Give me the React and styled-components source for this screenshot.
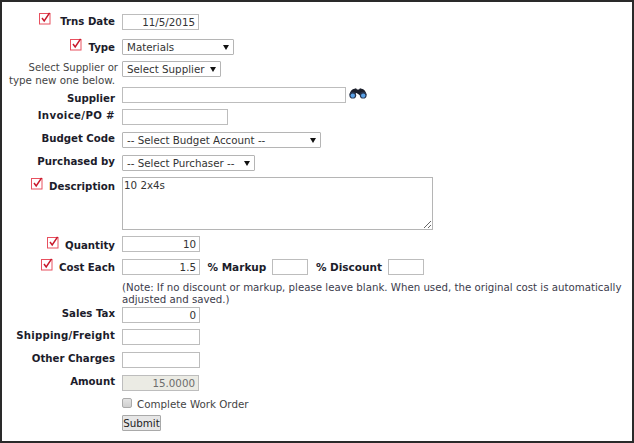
import React from 'react';
import styled, { createGlobalStyle } from 'styled-components';

const GlobalStyle = createGlobalStyle`
    html, body {
        margin: 0;
        background: #fff;
    }
`;

const Frame = styled.div`
    box-sizing: border-box;
    width: 634px;
    height: 443px;
    border: 2px solid #2a2a2a;
    padding-top: 12px;
    font-family: "DejaVu Sans", Verdana, sans-serif;
    font-size: 10.3px;
    color: #333;
    background: #fff;
    overflow: hidden;
`;

const Row = styled.div`
    display: grid;
    grid-template-columns: 113px 1fr;
    column-gap: 7px;
    align-items: ${(p) => (p.$top ? 'start' : 'center')};
    margin-top: ${(p) => p.$gap ?? 7}px;
    min-height: ${(p) => p.$min ?? 16}px;
`;

const Label = styled.label`
    display: flex;
    justify-content: flex-end;
    align-items: flex-start;
    gap: ${(p) => p.$space ?? 5}px;
    font-size: 10.2px;
    font-weight: bold;
    letter-spacing: ${(p) => p.$track ?? 0}px;
    color: #1c1c2b;
    line-height: 13px;
    transform: translateY(${(p) => p.$shift ?? -2}px);
`;

const Mark = styled.svg`
    flex: none;
    margin-top: -3px;
`;

const Hint = styled.div`
    text-align: right;
    line-height: 13px;
    color: #444;
`;

const HintFirst = styled.span`
    display: inline-block;
    margin-right: -3px;
    font-size: 10.1px;
`;

const Field = styled.div`
    display: flex;
    align-items: center;
`;

const TextInput = styled.input`
    box-sizing: border-box;
    width: ${(p) => p.$w}px;
    height: 16px;
    padding: 0 3px;
    border: 1px solid #bdbdbd;
    border-radius: 0;
    outline: none;
    font: inherit;
    color: #333;
    text-align: ${(p) => (p.$right ? 'right' : 'left')};
    background: ${(p) => (p.disabled ? '#ebebe4' : '#fff')};
    &:disabled {
        color: #6d6d6d;
    }
`;

const SelectBox = styled.div`
    box-sizing: border-box;
    width: ${(p) => p.$w}px;
    height: 16px;
    display: flex;
    align-items: center;
    justify-content: space-between;
    padding: 0 4px 0 4px;
    border: 1px solid #b5b5b5;
    border-radius: 1px;
    color: #333;
    background: #fff;
    white-space: nowrap;
`;

const Arrow = styled.span`
    width: 0;
    height: 0;
    border-left: 3px solid transparent;
    border-right: 3px solid transparent;
    border-top: 5px solid #111;
`;

const TextArea = styled.textarea`
    display: block;
    box-sizing: border-box;
    width: 311px;
    height: 53px;
    padding: 1px;
    border: 1px solid #b5b5b5;
    border-radius: 0;
    outline: none;
    font: inherit;
    color: #333;
`;

const InlineLabel = styled.span`
    font-size: 10.5px;
    font-weight: bold;
    color: #1c1c2b;
    margin: 0 6px 0 7.5px;
    white-space: nowrap;
`;

const Note = styled.div`
    padding-top: 1px;
    font-size: 10.22px;
    line-height: 12px;
    color: #3c3c4c;
    width: 505px;
`;

const CheckRow = styled.label`
    display: flex;
    align-items: center;
    gap: 5px;
    height: 11px;
    color: #444;
`;

const Box = styled.span`
    box-sizing: border-box;
    width: 10px;
    height: 10px;
    margin-top: -1px;
    border: 1px solid #aaa;
    border-radius: 2px;
    background: linear-gradient(#e4e4e4, #cfcfcf);
`;

const SubmitButton = styled.button`
    box-sizing: border-box;
    width: 39px;
    height: 16px;
    padding: 0;
    border: 1px solid #a9a9a9;
    border-radius: 1px;
    font: inherit;
    color: #222;
    background: #e6e6e6;
`;

const FindIcon = styled.svg`
    margin: 0 0 3px 3px;
`;

const RequiredMark = () => (
    <Mark width="13" height="13" viewBox="0 0 13 13" fill="none">
        <rect x="0.5" y="1.5" width="10.5" height="10.5" fill="#fff" stroke="#e8505f" strokeWidth="1" />
        <path d="M3 6 L5.2 9 L10.6 0.8" stroke="#c8192c" strokeWidth="1.5" />
    </Mark>
);

const Binoculars = () => (
    <FindIcon width="18" height="11" viewBox="0 0 18 11">
        <path d="M0.5 7 C1 3.5 3 1 5.5 0.8 L7 0.2 L8 1.5 L10 1.5 L11 0.2 L12.5 0.8 C15 1 17 3.5 17.5 7 L10.5 7 L7.5 5 Z" fill="#1b1f2b" />
        <circle cx="3.8" cy="7.2" r="3.4" fill="#27344d" />
        <circle cx="14.2" cy="7.2" r="3.4" fill="#27344d" />
        <circle cx="3.8" cy="7.6" r="2.2" fill="#5aa2e8" />
        <circle cx="14.2" cy="7.6" r="2.2" fill="#5aa2e8" />
    </FindIcon>
);

const FieldLabel = ({ required, shift, space, track, children }) => (
    <Label $shift={shift} $space={space} $track={track}>
        {required && <RequiredMark />}
        <span>{children}</span>
    </Label>
);

const Select = ({ w, children }) => (
    <SelectBox $w={w}>
        <span>{children}</span>
        <Arrow />
    </SelectBox>
);

const App = () => {
    return (
        <Frame>
            <GlobalStyle />
            <Row $gap={0}>
                <FieldLabel required space={8} shift={-1}>Trns Date</FieldLabel>
                <Field>
                    <TextInput $w={77} $right defaultValue="11/5/2015" />
                </Field>
            </Row>
            <Row $gap={9}>
                <FieldLabel required shift={0}>Type</FieldLabel>
                <Field>
                    <Select w={112}>Materials</Select>
                </Field>
            </Row>
            <Row $gap={6} $top>
                <Hint>
                    <HintFirst>Select Supplier or</HintFirst>
                    <br />
                    type new one below.
                </Hint>
                <Field>
                    <Select w={99}>Select Supplier</Select>
                </Field>
            </Row>
            <Row $gap={0}>
                <FieldLabel shift={3}>Supplier</FieldLabel>
                <Field>
                    <TextInput $w={224} />
                    <Binoculars />
                </Field>
            </Row>
            <Row $gap={6}>
                <FieldLabel track={0.35}>Invoice/PO #</FieldLabel>
                <Field>
                    <TextInput $w={106} />
                </Field>
            </Row>
            <Row>
                <FieldLabel>Budget Code</FieldLabel>
                <Field>
                    <Select w={199}>-- Select Budget Account --</Select>
                </Field>
            </Row>
            <Row>
                <FieldLabel>Purchased by</FieldLabel>
                <Field>
                    <Select w={133}>-- Select Purchaser --</Select>
                </Field>
            </Row>
            <Row $gap={6} $top>
                <FieldLabel required shift={3}>Description</FieldLabel>
                <Field>
                    <TextArea defaultValue="10 2x4s" />
                </Field>
            </Row>
            <Row $gap={6}>
                <FieldLabel required shift={1}>Quantity</FieldLabel>
                <Field>
                    <TextInput $w={78} $right defaultValue="10" />
                </Field>
            </Row>
            <Row>
                <FieldLabel required shift={0}>Cost Each</FieldLabel>
                <Field>
                    <TextInput $w={78} $right defaultValue="1.5" />
                    <InlineLabel>% Markup</InlineLabel>
                    <TextInput $w={36} />
                    <InlineLabel>% Discount</InlineLabel>
                    <TextInput $w={36} />
                </Field>
            </Row>
            <Row $gap={6} $top $min={26}>
                <span />
                <Note>
                    (Note: If no discount or markup, please leave blank. When used, the original cost is automatically adjusted and saved.)
                </Note>
            </Row>
            <Row $gap={0}>
                <FieldLabel>Sales Tax</FieldLabel>
                <Field>
                    <TextInput $w={78} $right defaultValue="0" />
                </Field>
            </Row>
            <Row $gap={6}>
                <FieldLabel track={0.2}>Shipping/Freight</FieldLabel>
                <Field>
                    <TextInput $w={78} />
                </Field>
            </Row>
            <Row>
                <FieldLabel>Other Charges</FieldLabel>
                <Field>
                    <TextInput $w={78} />
                </Field>
            </Row>
            <Row>
                <FieldLabel>Amount</FieldLabel>
                <Field>
                    <TextInput $w={77} $right disabled defaultValue="15.0000" />
                </Field>
            </Row>
            <Row $min={11}>
                <span />
                <CheckRow>
                    <Box />
                    Complete Work Order
                </CheckRow>
            </Row>
            <Row $gap={6}>
                <span />
                <Field>
                    <SubmitButton>Submit</SubmitButton>
                </Field>
            </Row>
        </Frame>
    );
};

export default App;
